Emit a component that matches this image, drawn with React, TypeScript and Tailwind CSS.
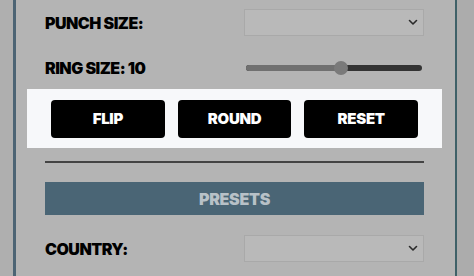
import React from "react";

const Chevron = () => (
  <svg width="10" height="7" viewBox="0 0 10 7" className="shrink-0">
    <path d="M1.5 1.5 L5 5 L8.5 1.5" fill="none" stroke="#2a2a2a" strokeWidth="1.6" strokeLinecap="round" strokeLinejoin="round" />
  </svg>
);

const Select = () => (
  <div className="w-[180px] h-[27px] border border-[#a9a9a9] bg-[#b9b9b9] flex items-center justify-end pr-[5px]">
    <Chevron />
  </div>
);

export default function App() {
  const font = { fontFamily: "Inter, 'Noto Sans', sans-serif" };
  return (
    <div className="w-[474px] h-[276px] overflow-hidden bg-[#acacac] flex" style={font}>
      <div className="w-[13px] shrink-0 bg-[#afafaf]" />
      <div className="w-[444px] shrink-0 h-full bg-[#b4b4b4] border-l-[3px] border-r-[2px] border-l-[#4d6474] border-r-[#3f6168] pl-[29px] pr-[31px] pt-[9px] flex flex-col">
        <div className="flex items-center justify-between h-[27px]">
          <span className="text-[16px] font-black text-black tracking-[-0.5px]">PUNCH SIZE:</span>
          <Select />
        </div>
        <div className="flex items-center justify-between h-[22px] mt-[21px]">
          <span className="text-[16px] font-black text-black tracking-[-0.5px]">RING SIZE: 10</span>
          <div className="relative w-[176px] h-[14px] mr-[2px] flex items-center">
            <div className="w-full h-[6px] rounded-full bg-[#333333] overflow-hidden flex">
              <div className="w-[95px] h-full bg-[#707070]" />
            </div>
            <div className="absolute left-[88px] top-0 w-[14px] h-[14px] rounded-full bg-[#7a7a7a]" />
          </div>
        </div>
        <div className="-mx-[18px] mt-[10px] bg-[#f7f8fa] pt-[11px] pb-[10px] px-[24px] flex gap-[13px]">
          {["FLIP", "ROUND", "RESET"].map((t) => (
            <div key={t} className="flex-1 h-[38px] rounded-[4px] bg-black text-white flex items-center justify-center text-[15px] font-black tracking-[-0.3px]">
              {t}
            </div>
          ))}
        </div>
        <div className="mt-[13px] h-[2px] bg-[#444444]" />
        <div className="mt-[19px] h-[33px] bg-[#4a6575] flex items-center justify-center text-[16px] font-black text-[#b8c1c7] tracking-[-0.3px]">
          PRESETS
        </div>
        <div className="flex items-center justify-between h-[27px] mt-[20px]">
          <span className="text-[16px] font-black text-black tracking-[-0.5px]">COUNTRY:</span>
          <Select />
        </div>
      </div>
      <div className="flex-1 bg-[#acacac]" />
    </div>
  );
}
